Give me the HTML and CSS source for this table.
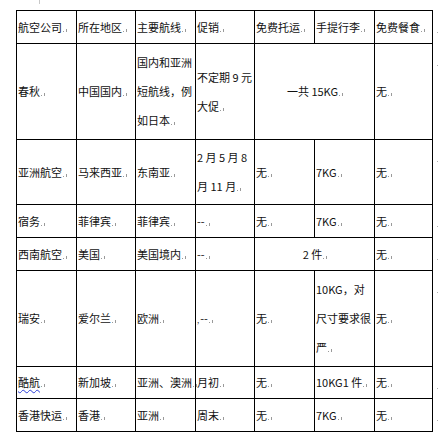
FILE: index.html
```html
<!DOCTYPE html>
<html lang="zh">
<head>
<meta charset="utf-8">
<title>航空公司对比</title>
<link rel="stylesheet" href="styles.css">
</head>
<body>
<div class="crop-mark"></div>
<table class="grid">
  <colgroup>
    <col class="c1"><col class="c2"><col class="c3"><col class="c4"><col class="c5"><col class="c6"><col class="c7"><col class="ce">
  </colgroup>
  <tr class="r1">
    <td>航空公司<span class="pm"></span></td>
    <td>所在地区<span class="pm"></span></td>
    <td>主要航线<span class="pm"></span></td>
    <td>促销<span class="pm"></span></td>
    <td>免费托运<span class="pm"></span></td>
    <td>手提行李<span class="pm"></span></td>
    <td>免费餐食<span class="pm"></span></td>
    <td class="end"><span class="pm"></span></td>
  </tr>
  <tr class="r3">
    <td>春秋<span class="pm"></span></td>
    <td>中国国内<span class="pm"></span></td>
    <td>国内和亚洲<br>短航线，例<br>如日本<span class="pm"></span></td>
    <td>不定期 9 元<br>大促<span class="pm"></span></td>
    <td colspan="2" class="center">一共 15KG<span class="pm"></span></td>
    <td>无<span class="pm"></span></td>
    <td class="end"><span class="pm"></span></td>
  </tr>
  <tr class="r2">
    <td>亚洲航空<span class="pm"></span></td>
    <td>马来西亚<span class="pm"></span></td>
    <td>东南亚<span class="pm"></span></td>
    <td>2 月 5 月 8<br>月 11 月<span class="pm"></span></td>
    <td>无<span class="pm"></span></td>
    <td>7KG<span class="pm"></span></td>
    <td>无<span class="pm"></span></td>
    <td class="end"><span class="pm"></span></td>
  </tr>
  <tr class="r1">
    <td>宿务<span class="pm"></span></td>
    <td>菲律宾<span class="pm"></span></td>
    <td>菲律宾<span class="pm"></span></td>
    <td>--<span class="pm"></span></td>
    <td>无<span class="pm"></span></td>
    <td>7KG<span class="pm"></span></td>
    <td>无<span class="pm"></span></td>
    <td class="end"><span class="pm"></span></td>
  </tr>
  <tr class="r1">
    <td>西南航空<span class="pm"></span></td>
    <td>美国<span class="pm"></span></td>
    <td>美国境内<span class="pm"></span></td>
    <td>--<span class="pm"></span></td>
    <td colspan="2" class="center">2 件<span class="pm"></span></td>
    <td>无<span class="pm"></span></td>
    <td class="end"><span class="pm"></span></td>
  </tr>
  <tr class="r3">
    <td>瑞安<span class="pm"></span></td>
    <td>爱尔兰<span class="pm"></span></td>
    <td>欧洲<span class="pm"></span></td>
    <td><span class="tick">,</span>--<span class="pm"></span></td>
    <td>无<span class="pm"></span></td>
    <td>10KG，对<br>尺寸要求很<br>严<span class="pm"></span></td>
    <td>无<span class="pm"></span></td>
    <td class="end"><span class="pm"></span></td>
  </tr>
  <tr class="r1s">
    <td><span class="spell">酷航</span><span class="pm"></span></td>
    <td>新加坡<span class="pm"></span></td>
    <td>亚洲、澳洲<span class="pm"></span></td>
    <td>月初<span class="pm"></span></td>
    <td>无<span class="pm"></span></td>
    <td>10KG1 件<span class="pm"></span></td>
    <td>无<span class="pm"></span></td>
    <td class="end"><span class="pm"></span></td>
  </tr>
  <tr class="r1">
    <td>香港快运<span class="pm"></span></td>
    <td>香港<span class="pm"></span></td>
    <td>亚洲<span class="pm"></span></td>
    <td>周末<span class="pm"></span></td>
    <td>无<span class="pm"></span></td>
    <td>7KG<span class="pm"></span></td>
    <td>无<span class="pm"></span></td>
    <td class="end"><span class="pm"></span></td>
  </tr>
</table>
</body>
</html>
```
FILE: styles.css
```css
html, body {
  margin: 0;
  padding: 0;
  background: #ffffff;
}
body {
  font-family: "Noto Sans CJK SC", "Noto Sans", sans-serif;
  font-size: 11px;
  color: #111111;
}
.crop-mark {
  width: 1px;
  height: 4px;
  margin-left: 39px;
  background: #c8c8c8;
}
.grid {
  margin-top: 6px;
  margin-left: 16px;
  border-collapse: collapse;
  table-layout: fixed;
  width: 426px;
}
.c1 { width: 60px; }
.c2 { width: 59px; }
.c3 { width: 60px; }
.c4 { width: 59px; }
.c5 { width: 60px; }
.c6 { width: 60px; }
.c7 { width: 58px; }
.ce { width: 10px; }
.grid td {
  border: 1px solid #000000;
  padding: 0 0 0 1px;
  line-height: 29px;
  vertical-align: middle;
  white-space: nowrap;
  overflow: visible;
}
.grid td.end {
  border: none;
  padding: 3px 0 0 3px;
  vertical-align: top;
}
.grid td.center {
  text-align: center;
}
.r1 { height: 33px; }
.r1s { height: 32px; }
.r2 { height: 65px; }
.r3 { height: 96px; }
.pm {
  display: inline-block;
  width: 4px;
  height: 4px;
  margin-left: 1px;
  vertical-align: baseline;
  background:
    linear-gradient(#9a9a9a, #9a9a9a) right bottom / 1px 3px no-repeat,
    linear-gradient(#9a9a9a, #9a9a9a) left bottom / 1px 1px no-repeat;
}
.end .pm {
  background:
    linear-gradient(#b0b0b0, #b0b0b0) right 1px / 1px 1px no-repeat,
    linear-gradient(#b0b0b0, #b0b0b0) left bottom / 1px 1px no-repeat;
}
.tick {
  font-size: 8px;
  color: #333333;
  margin-right: 1px;
}
.spell {
  text-decoration: underline wavy #2b3fd6;
  text-decoration-thickness: 1px;
  text-underline-offset: 2px;
}
```
